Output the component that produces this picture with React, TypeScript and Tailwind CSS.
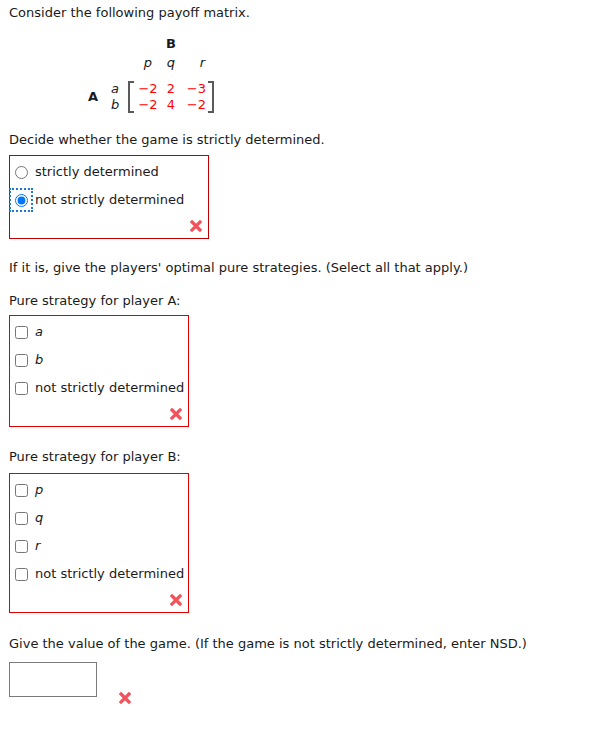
import {ReactElement} from 'react';

function CrossMark(props:{className?:string}) : ReactElement {
  return <svg className={props.className} width="12" height="12" viewBox="0 0 12 12">
    <path d="M2 2 L10 10 M10 2 L2 10" stroke="#f2525a" strokeWidth="3.2" strokeLinecap="square"/>
  </svg>;
}

function ChoiceRow(props:{type:'radio'|'checkbox',label:string,italic?:boolean,checked?:boolean,focused?:boolean}) : ReactElement {
  const {type,label,italic,checked,focused} = props;
  return <label className="flex items-center h-[28px] whitespace-nowrap">
    <span className={'-ml-[2px] w-[24px] h-[24px] shrink-0 flex items-center justify-center relative z-10 '+(focused?'border-2 border-dotted border-[#1a78d8]':'')}>
      <input type={type} readOnly checked={!!checked} className="m-0 w-[13px] h-[13px]"/>
    </span>
    <span className={'ml-[2px] '+(italic?'italic':'')}>{label}</span>
  </label>;
}

function ChoiceBox(props:{width:string,border:string,children:React.ReactNode}) : ReactElement {
  return <div className={props.width+' border '+props.border+' pl-[1px] pt-[2px] pb-[6px] pr-[6px] flex flex-col'}>
    {props.children}
    <CrossMark className="self-end mt-[6px]"/>
  </div>;
}

export default function App() : ReactElement {
  return <div className="pl-[9px] pt-[5px] text-[13px] leading-4 text-[#1a1a1a] bg-white min-h-[739px]" style={{fontFamily:'"DejaVu Sans", Verdana, sans-serif'}}>
    <p>Consider the following payoff matrix.</p>

    <div className="mt-[15px] ml-[79px] grid grid-cols-[20px_20px_8px_24px_22px_26px_6px] grid-rows-[16px_19px]">
      <div className="col-start-5 row-start-1 text-center font-bold">B</div>
      <div className="col-start-4 row-start-2 pt-[3px] text-center italic">p</div>
      <div className="col-start-5 row-start-2 pt-[3px] text-center italic">q</div>
      <div className="col-start-6 row-start-2 pt-[3px] text-right pr-[3px] italic">r</div>
    </div>
    <div className="mt-[10px] ml-[79px] grid grid-cols-[20px_20px_8px_24px_22px_26px_6px] grid-rows-[16px_16px]">
      <div className="col-start-1 row-start-1 row-span-2 self-center font-bold">A</div>
      <div className="col-start-2 row-start-1 pl-[3px] italic">a</div>
      <div className="col-start-2 row-start-2 pl-[3px] italic">b</div>
      <div className="col-start-3 row-start-1 row-span-2 w-[6px] border-l-2 border-t-2 border-b-2 border-[#5a5a5a]"></div>
      <div className="col-start-4 row-start-1 text-center text-[#ff0000]">−2</div>
      <div className="col-start-5 row-start-1 text-center text-[#ff0000]">2</div>
      <div className="col-start-6 row-start-1 text-right pr-[2px] text-[#ff0000]">−3</div>
      <div className="col-start-4 row-start-2 text-center text-[#ff0000]">−2</div>
      <div className="col-start-5 row-start-2 text-center text-[#ff0000]">4</div>
      <div className="col-start-6 row-start-2 text-right pr-[2px] text-[#ff0000]">−2</div>
      <div className="col-start-7 row-start-1 row-span-2 w-[6px] border-r-2 border-t-2 border-b-2 border-[#5a5a5a]"></div>
    </div>

    <p className="mt-[19px]">Decide whether the game is strictly determined.</p>
    <div className="mt-[7px]">
      <ChoiceBox width="w-[200px]" border="border-[#c00000]">
        <ChoiceRow type="radio" label="strictly determined"/>
        <ChoiceRow type="radio" label="not strictly determined" checked focused/>
      </ChoiceBox>
    </div>

    <p className="mt-[21px]">If it is, give the players' optimal pure strategies. (Select all that apply.)</p>
    <p className="mt-[17px]">Pure strategy for player A:</p>
    <div className="mt-[6px]">
      <ChoiceBox width="w-[180px]" border="border-[#e00000]">
        <ChoiceRow type="checkbox" label="a" italic/>
        <ChoiceRow type="checkbox" label="b" italic/>
        <ChoiceRow type="checkbox" label="not strictly determined"/>
      </ChoiceBox>
    </div>

    <p className="mt-[22px]">Pure strategy for player B:</p>
    <div className="mt-[8px]">
      <ChoiceBox width="w-[180px]" border="border-[#e00000]">
        <ChoiceRow type="checkbox" label="p" italic/>
        <ChoiceRow type="checkbox" label="q" italic/>
        <ChoiceRow type="checkbox" label="r" italic/>
        <ChoiceRow type="checkbox" label="not strictly determined"/>
      </ChoiceBox>
    </div>

    <p className="mt-[23px]">Give the value of the game. (If the game is not strictly determined, enter NSD.)</p>
    <div className="mt-[10px] flex items-end">
      <input type="text" className="w-[88px] h-[35px] border border-[#7a7a7a] bg-white"/>
      <CrossMark className="ml-[22px] -mb-[7px]"/>
    </div>
  </div>;
}
